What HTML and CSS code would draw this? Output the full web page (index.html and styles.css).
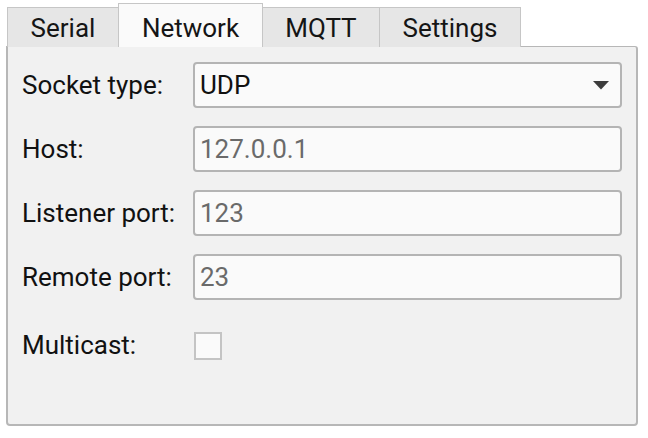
FILE: index.html
```html
<!DOCTYPE html>
<html>
<head>
<meta charset="utf-8">
<link rel="stylesheet" href="styles.css">
</head>
<body>
<div class="app">
  <div class="tabbar">
    <div class="tab tab-serial">Serial</div>
    <div class="tab tab-network active">Network</div>
    <div class="tab tab-mqtt">MQTT</div>
    <div class="tab tab-settings">Settings</div>
  </div>
  <div class="panel">
    <div class="form">
      <div class="label">Socket type:</div>
      <div class="combo">
        <span class="combo-text">UDP</span>
        <svg class="arrow" width="16" height="9" viewBox="0 0 16 9"><polygon points="0,0 16,0 8,8.5" fill="#3c3c3c"/></svg>
      </div>
      <div class="label">Host:</div>
      <div class="field">127.0.0.1</div>
      <div class="label">Listener port:</div>
      <div class="field">123</div>
      <div class="label">Remote port:</div>
      <div class="field">23</div>
      <div class="label label-check">Multicast:</div>
      <div class="check-cell"><div class="checkbox"></div></div>
    </div>
  </div>
</div>
</body>
</html>
```

FILE: styles.css
```css
* { box-sizing: border-box; }
html, body {
  margin: 0;
  padding: 0;
  background: #ffffff;
}
body {
  font-family: Roboto, "Liberation Sans", sans-serif;
  font-size: 26px;
  color: #111111;
}
.app {
  width: 648px;
  height: 438px;
  padding: 3px 0 0 6px;
}
.tabbar {
  display: flex;
  align-items: flex-end;
  height: 44px;
  padding-left: 1px;
  position: relative;
  z-index: 1;
  margin-bottom: -1px;
}
.tab {
  height: 40px;
  background: #e6e6e6;
  border: 1px solid #c6c6c6;
  border-bottom: none;
  display: flex;
  align-items: center;
  justify-content: center;
  padding-top: 1px;
  color: #151515;
}
.tab + .tab { margin-left: -1px; }
.tab-serial { width: 112px; }
.tab-network { width: 145px; }
.tab-mqtt { width: 118px; }
.tab-settings { width: 142px; }
.tab.active {
  height: 44px;
  background: #fafafa;
  padding-top: 5px;
}
.panel {
  width: 632px;
  height: 380px;
  background: #f1f1f1;
  border: 2px solid #b7b7b7;
  border-top-width: 1px;
  border-radius: 0 3px 4px 4px;
  padding: 15px 14px 0 14px;
}
.form {
  display: grid;
  grid-template-columns: 171px 429px;
  grid-auto-rows: 46px;
  row-gap: 18px;
  align-items: center;
}
.label {
  color: #111111;
}
.label-check {
  padding-top: 8px;
}
.combo, .field {
  height: 46px;
  background: #fafafa;
  border: 2px solid #b4b4b4;
  border-radius: 4px;
  display: flex;
  align-items: center;
  padding-left: 5px;
}
.combo {
  justify-content: space-between;
  padding-right: 11px;
  color: #111111;
}
.field { color: #6a6a6a; }
.check-cell {
  display: flex;
  align-items: center;
  height: 46px;
  padding-top: 9px;
}
.checkbox {
  width: 28px;
  height: 28px;
  background: #fafafa;
  border: 2px solid #c4c4c4;
  margin-left: 1px;
}
```
